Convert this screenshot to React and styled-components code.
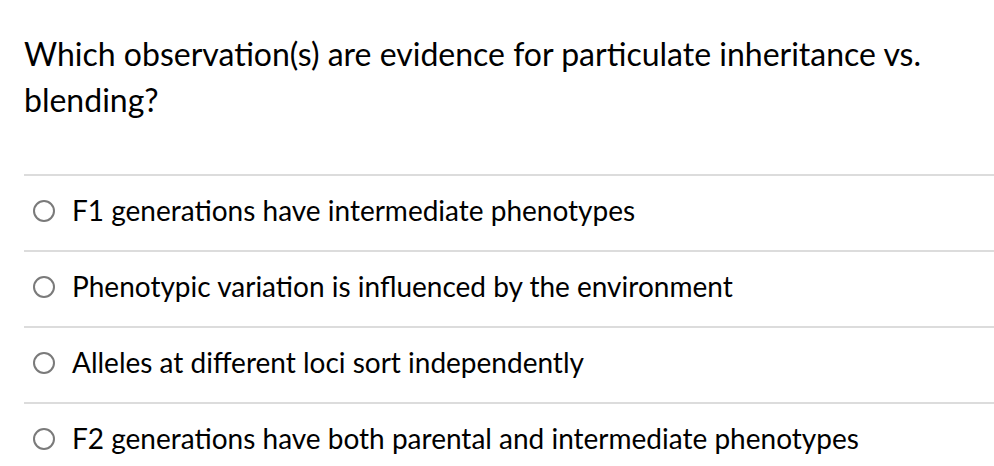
import React from "react";
import styled, { createGlobalStyle } from "styled-components";

const Global = createGlobalStyle`
  html, body { margin: 0; padding: 0; background: #fff; }
  body { font-family: Lato, "Open Sans", sans-serif; color: #000; }
`;

const Page = styled.div`
  padding: 0 0 0 24px;
`;

const Question = styled.p`
  margin: 0;
  padding: 31px 0 0 0;
  font-size: 32px;
  line-height: 46px;
  height: 174px;
  box-sizing: border-box;
`;

const List = styled.div`
  display: flex;
  flex-direction: column;
`;

const Row = styled.label`
  display: flex;
  align-items: center;
  gap: 17px;
  height: 76px;
  border-top: 2px solid #dcdcdc;
  box-sizing: border-box;
  padding: 0 0 4px 9px;
  font-size: 28px;
`;

const Radio = styled.span`
  width: 22px;
  height: 22px;
  border-radius: 50%;
  border: 2px solid #7a7a7a;
  box-sizing: border-box;
  flex: none;
  background: #fff;
`;

const OptionText = styled.span`
  margin-bottom: 2px;
`;

const options = [
  "F1 generations have intermediate phenotypes",
  "Phenotypic variation is influenced by the environment",
  "Alleles at different loci sort independently",
  "F2 generations have both parental and intermediate phenotypes",
];

export default function App() {
  return (
    <Page>
      <Global />
      <Question>
        Which observation(s) are evidence for particulate inheritance vs. blending?
      </Question>
      <List>
        {options.map((o) => (
          <Row key={o}>
            <Radio />
            <OptionText>{o}</OptionText>
          </Row>
        ))}
      </List>
    </Page>
  );
}
